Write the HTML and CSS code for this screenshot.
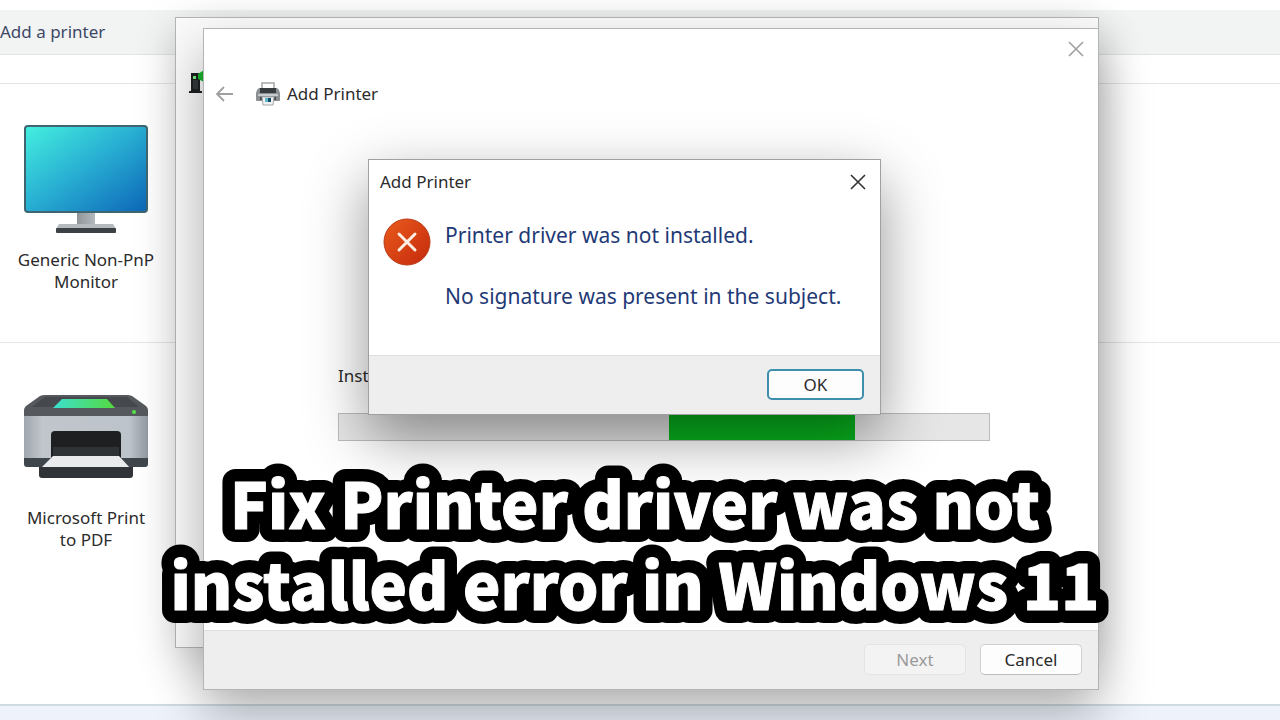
FILE: index.html
```
<!DOCTYPE html>
<html lang="en">
<head>
  <meta charset="UTF-8" />
  <title>Add Printer</title>
  <link rel="stylesheet" href="styles.css">
</head>
<body>

  <main class="explorer">
    <nav class="commands"><a href="#">Add a printer</a></nav>
    <div class="spacer"></div>

    <section class="devices">
      <figure class="device">
        <svg width="126" height="110" viewBox="0 0 126 110">
          <defs>
            <linearGradient id="screen" x1="0" y1="0" x2="1" y2="1">
              <stop offset="0" stop-color="#44f0df" />
              <stop offset="0.5" stop-color="#27acd2" />
              <stop offset="1" stop-color="#0d66b8" />
            </linearGradient>
            <linearGradient id="stand" x1="0" y1="0" x2="1" y2="0">
              <stop offset="0" stop-color="#8f9599" />
              <stop offset="1" stop-color="#b4b9bd" />
            </linearGradient>
          </defs>
          <rect x="54" y="86" width="18" height="15" fill="url(#stand)" />
          <path d="M36 99h54l3 5H33z" fill="#b5babe" />
          <rect x="33" y="103" width="60" height="5" rx="1" fill="#3c4145" />
          <rect x="2" y="1" width="122" height="86" rx="3" fill="url(#screen)" stroke="#3f6670" stroke-width="2" />
        </svg>
        <figcaption>Generic Non-PnP Monitor</figcaption>
      </figure>
    </section>

    <section class="devices">
      <figure class="device">
        <svg width="126" height="86" viewBox="0 0 126 86">
          <defs>
            <linearGradient id="glass" x1="0" y1="0" x2="1" y2="0">
              <stop offset="0" stop-color="#3ce0d0" />
              <stop offset="1" stop-color="#55d93e" />
            </linearGradient>
            <linearGradient id="shell" x1="0" y1="0" x2="1" y2="0">
              <stop offset="0" stop-color="#a0a6ad" />
              <stop offset="0.15" stop-color="#c0c6cc" />
              <stop offset="0.85" stop-color="#bdc3ca" />
              <stop offset="1" stop-color="#9399a0" />
            </linearGradient>
          </defs>
          <path d="M22 1h82q3 0 5 1l14 10q2 2 2 4v8H1v-8q0-2 2-4L17 2q2-1 5-1z" fill="#55595d" />
          <path d="M22 3h82l12 10H9z" fill="#45494d" />
          <path d="M39 5h45l8 9H30z" fill="url(#glass)" />
          <circle cx="111" cy="18" r="2" fill="#57e34a" />
          <path d="M1 22h124v46H1z" fill="url(#shell)" />
          <path d="M1 64h124v6q0 3-3 3H4q-3 0-3-3z" fill="#3f464c" />
          <path d="M28 66V41q0-4 4-4h62q4 0 4 4v25z" fill="#1d1f21" />
          <path d="M30 53h66v10H30z" fill="#303335" />
          <path d="M30 62h66l12 13H17z" fill="#e9ebed" />
          <path d="M16 73h94v8q0 3-3 3H19q-3 0-3-3z" fill="#303438" />
        </svg>
        <figcaption>Microsoft Print to PDF</figcaption>
      </figure>
    </section>

    <div class="statusbar"></div>
  </main>

  <div class="window window-back">
    <svg width="16" height="26" viewBox="0 0 16 26">
      <path d="M2 4h9v18h2v2H0v-2h2z" fill="#1d1f20" />
      <path d="M4 11h5v9H4z" fill="#34383a" />
      <path d="M9 5l6-4v12L9 10z" fill="#18b52c" />
      <rect x="4" y="7" width="3" height="3" fill="#74f27e" />
    </svg>
  </div>

  <div class="window wizard">
    <div class="wizard-top">
      <button class="close" aria-label="Close wizard">
        <svg width="16" height="16" viewBox="0 0 16 16"><path d="M1 1l14 14M15 1L1 15" stroke="#a0a0a0" stroke-width="1.6" /></svg>
      </button>
    </div>
    <header class="wizard-head">
      <button class="back" aria-label="Back">
        <svg width="18" height="16" viewBox="0 0 18 16"><path d="M18 8H2M9 1L2 8l7 7" fill="none" stroke="#a0a0a0" stroke-width="1.8" /></svg>
      </button>
      <svg width="24" height="24" viewBox="0 0 24 24">
        <path d="M6 8V1h12v7" fill="#fff" stroke="#a5a5a5" stroke-width="1.5" />
        <path d="M3 6h18q3 2 3 5v7q0 1-1 1H1q-1 0-1-1v-7q0-3 3-5z" fill="#8c8f91" />
        <path d="M4 6h16v5H4z" fill="#393c3f" />
        <path d="M2 12h20v2H2z" fill="#c8cacb" />
        <path d="M4 15h16v3H4z" fill="#45494c" />
        <path d="M6 15h12l-1 8H7z" fill="#eef2f4" stroke="#a5a5a5" />
        <path d="M9 16h6v4H9z" fill="#5fb9c9" />
        <path d="M12 16h3v4h-3z" fill="#174c68" />
      </svg>
      <h1>Add Printer</h1>
    </header>
    <div class="wizard-body">
      <label for="progress">Installing driver...</label>
      <div class="track" id="progress" role="progressbar"><div class="bar"></div></div>
    </div>
    <footer class="wizard-foot">
      <button class="btn" disabled>Next</button>
      <button class="btn">Cancel</button>
    </footer>
  </div>

  <div class="window alert" role="alertdialog" aria-labelledby="alert-title">
    <header class="alert-head">
      <h2 id="alert-title">Add Printer</h2>
      <button class="close" aria-label="Close message">
        <svg width="16" height="16" viewBox="0 0 16 16"><path d="M1 1l14 14M15 1L1 15" stroke="#333" stroke-width="1.6" /></svg>
      </button>
    </header>
    <div class="alert-body">
      <svg width="48" height="48" viewBox="0 0 48 48">
        <defs>
          <linearGradient id="error" x1="0" y1="0" x2="1" y2="1">
            <stop offset="0" stop-color="#ea5b1c" />
            <stop offset="1" stop-color="#c4290c" />
          </linearGradient>
        </defs>
        <circle cx="24" cy="24" r="23" fill="url(#error)" stroke="#b83a16" />
        <path d="M16 16l16 16M32 16L16 32" stroke="#fbeee2" stroke-width="3" stroke-linecap="round" />
      </svg>
      <div class="message">
        <p>Printer driver was not installed.</p>
        <p>No signature was present in the subject.</p>
      </div>
    </div>
    <footer class="alert-foot">
      <button class="btn btn-ok">OK</button>
    </footer>
  </div>

  <svg class="caption" width="960" height="170" viewBox="0 0 960 170">
    <g id="headline" text-anchor="middle">
      <text x="480" y="69">Fix Printer driver was not</text>
      <text x="480" y="150">installed error in Windows 11</text>
    </g>
    <use class="inner" href="#headline" />
    <use class="face" href="#headline" />
  </svg>

</body>
</html>
```
FILE: styles.css
```
:root {
  --text: #2b2b2b;
  --message: #1f3a76;
  --line: #e4e5e6;
  --footer: #eeeeee;
}

* {
  box-sizing: border-box;
}

body {
  margin: 0;
  position: relative;
  min-height: 100vh;
  overflow: hidden;
  font-family: "Noto Sans", "Open Sans", sans-serif;
  font-size: 17px;
  line-height: 22px;
  color: var(--text);
  background: #fff;
}

h1, h2, p, figure {
  margin: 0;
  font-size: inherit;
  font-weight: 400;
}

button {
  font: inherit;
  color: inherit;
}

svg {
  display: block;
  flex: none;
}

/* devices page */
.explorer {
  display: flex;
  flex-direction: column;
  min-height: 100vh;
  padding-top: 10px;
}

.commands {
  padding: 11px 0;
  background: #f2f4f4;
  border-bottom: 1px solid #e2e4e4;
}

.commands a {
  color: #3c4866;
  text-decoration: none;
}

.spacer {
  height: 28px;
}

.devices {
  height: 259px;
  padding: 41px 0 0 13px;
  border-top: 1px solid var(--line);
}

.devices + .devices {
  flex: 1;
  padding-top: 51px;
}

.device {
  display: flex;
  flex-direction: column;
  align-items: center;
  gap: 14px;
  width: 146px;
  text-align: center;
}

.devices + .devices .device {
  gap: 27px;
}

.devices + .devices figcaption {
  padding: 0 12px;
}

.statusbar {
  height: 16px;
  background: #edf2fb;
  border-top: 2px solid #d0dae3;
}

/* windows */
.window {
  position: absolute;
  border: 1px solid #b4b4b4;
  background: #fff;
}

.window-back {
  left: 175px;
  top: 17px;
  width: 924px;
  height: 631px;
  padding: 51px 0 0 13px;
  background: #fafafa;
  box-shadow: 0 12px 40px rgba(0, 0, 0, 0.2);
}

.wizard {
  display: flex;
  flex-direction: column;
  left: 203px;
  top: 28px;
  width: 896px;
  height: 662px;
  box-shadow: 0 24px 48px rgba(0, 0, 0, 0.3);
}

.close, .back {
  padding: 0;
  border: none;
  background: none;
}

.wizard-top {
  display: flex;
  justify-content: flex-end;
  padding: 12px 14px 0;
}

.wizard-head {
  display: flex;
  align-items: center;
  padding: 25px 11px 0;
}

.wizard-head .back {
  margin-right: 23px;
}

.wizard-head h1 {
  margin-left: 7px;
}

.wizard-body {
  flex: 1;
  padding: 259px 108px 0 134px;
}

.wizard-body label {
  display: block;
}

.track {
  height: 28px;
  margin-top: 26px;
  background: #e6e6e6;
  border: 1px solid #bcbcbc;
}

.bar {
  width: 186px;
  height: 100%;
  margin-left: 330px;
  background: #08b41e;
}

.wizard-foot, .alert-foot {
  display: flex;
  justify-content: flex-end;
  gap: 14px;
  padding: 13px 16px 14px;
  background: var(--footer);
  border-top: 1px solid #dfdfdf;
}

.btn {
  width: 102px;
  height: 31px;
  padding: 0;
  border: 1px solid #d0d0d0;
  border-bottom-color: #bbb;
  border-radius: 5px;
  background: #fdfdfd;
}

.btn:disabled {
  color: #9b9b9b;
  background: #f3f3f3;
  border-color: #e3e3e3;
}

.btn-ok {
  width: 97px;
  border: 2px solid #3e8eae;
}

.alert {
  left: 368px;
  top: 159px;
  width: 513px;
  height: 256px;
  display: flex;
  flex-direction: column;
  border-color: #a0a0a0;
  box-shadow: 0 22px 56px rgba(0, 0, 0, 0.42);
}

.alert-head {
  display: flex;
  justify-content: space-between;
  align-items: center;
  padding: 11px 14px 0 11px;
}

.alert-body {
  flex: 1;
  display: flex;
  gap: 14px;
  padding: 25px 14px 0;
}

.message {
  display: flex;
  flex-direction: column;
  gap: 32px;
  padding-top: 3px;
  font-size: 21px;
  line-height: 29px;
  white-space: nowrap;
  color: var(--message);
}

/* headline: wide black outline, a narrower one that closes the counters, white face on top */
.caption {
  position: absolute;
  left: 155px;
  top: 460px;
  overflow: visible;
  font-family: "Noto Sans CJK JP", sans-serif;
  font-weight: 900;
  font-size: 63px;
  stroke-linejoin: round;
  fill: #fff;
}

.caption text {
  stroke: var(--outline, #000);
  stroke-width: var(--outline-width, 26px);
}

.inner {
  --outline-width: 14px;
}

.face {
  --outline: #fff;
  --outline-width: 1px;
}
```
